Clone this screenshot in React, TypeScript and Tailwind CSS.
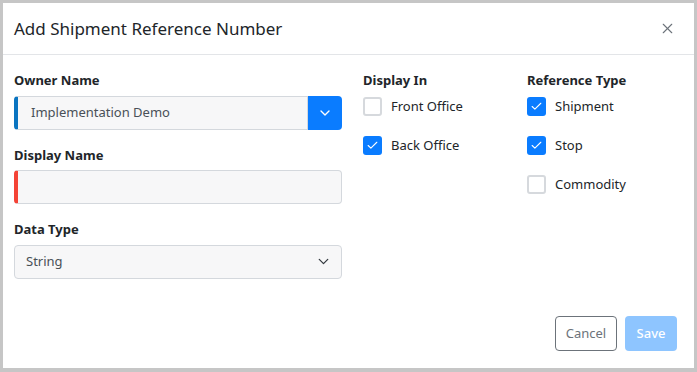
import { Check, ChevronDown, X } from "lucide-react";

function Box({ checked, label }: { checked?: boolean; label: string }) {
  return (
    <label className="flex h-[18px] items-center gap-[9px] text-[13px] text-[#212529]">
      <span
        className={
          checked
            ? "flex size-[19px] items-center justify-center rounded-[3px] bg-[#0a7cff]"
            : "size-[19px] rounded-[3px] border-2 border-[#d6d9dd] bg-white"
        }
      >
        {checked && <Check className="size-[13px] text-white" strokeWidth={2} />}
      </span>
      {label}
    </label>
  );
}

export default function App() {
  return (
    <div className="h-[372px] w-[697px] bg-[#c6c6c6] pt-[3px] pl-[3px] pr-[3px] pb-[4px] font-['Noto_Sans',sans-serif]">
      <div className="flex h-full flex-col bg-white">
        {/* Header */}
        <div className="flex h-[52px] items-center justify-between border-b border-[#e3e5e8] pr-[18px] pl-[11px]">
          <h1 className="text-[17px] text-[#212529]">Add Shipment Reference Number</h1>
          <X className="size-[17px] text-[#6c737a]" strokeWidth={1.6} />
        </div>

        {/* Body */}
        <div className="flex flex-1 gap-[21px] pl-[11px] pt-[16px]">
          <div className="flex w-[328px] flex-col">
            <div className="text-[13px] font-bold text-[#212529]">Owner Name</div>
            <div className="mt-[5px] flex h-[34px]">
              <div className="flex flex-1 items-center rounded-l-[4px] border border-l-4 border-[#d4d8dd] border-l-[#0a74c0] bg-[#f7f7f8] pl-[13px] text-[13px] text-[#495057]">
                Implementation Demo
              </div>
              <div className="flex w-[34px] items-center justify-center rounded-r-[4px] bg-[#0a7cff]">
                <ChevronDown className="size-[16px] text-white" strokeWidth={2} />
              </div>
            </div>

            <div className="mt-[16px] text-[13px] font-bold text-[#212529]">Display Name</div>
            <div className="mt-[5px] h-[34px] rounded-[4px] border border-l-4 border-[#d4d8dd] border-l-[#f44336] bg-[#f7f7f8]" />

            <div className="mt-[16px] text-[13px] font-bold text-[#212529]">Data Type</div>
            <div className="mt-[5px] flex h-[34px] items-center justify-between rounded-[4px] border border-[#d4d8dd] bg-[#f7f7f8] pl-[11px] pr-[9px] text-[13px] text-[#495057]">
              String
              <ChevronDown className="size-[17px] text-[#343a40]" strokeWidth={1.8} />
            </div>
          </div>

          <div className="flex w-[143px] flex-col">
            <div className="text-[13px] font-bold text-[#212529]">Display In</div>
            <div className="mt-[7px] flex flex-col gap-[21px]">
              <Box label="Front Office" />
              <Box checked label="Back Office" />
            </div>
          </div>

          <div className="flex flex-col">
            <div className="text-[13px] font-bold text-[#212529]">Reference Type</div>
            <div className="mt-[7px] flex flex-col gap-[21px]">
              <Box checked label="Shipment" />
              <Box checked label="Stop" />
              <Box label="Commodity" />
            </div>
          </div>
        </div>

        {/* Footer */}
        <div className="flex justify-end gap-[8px] pr-[17px] pb-[17px]">
          <button className="h-[35px] w-[62px] rounded-[4px] border border-[#6c737a] text-[13px] text-[#6c737a]">
            Cancel
          </button>
          <button className="h-[35px] w-[52px] rounded-[4px] bg-[#8ec5ff] text-[13px] font-medium text-white">
            Save
          </button>
        </div>
      </div>
    </div>
  );
}
